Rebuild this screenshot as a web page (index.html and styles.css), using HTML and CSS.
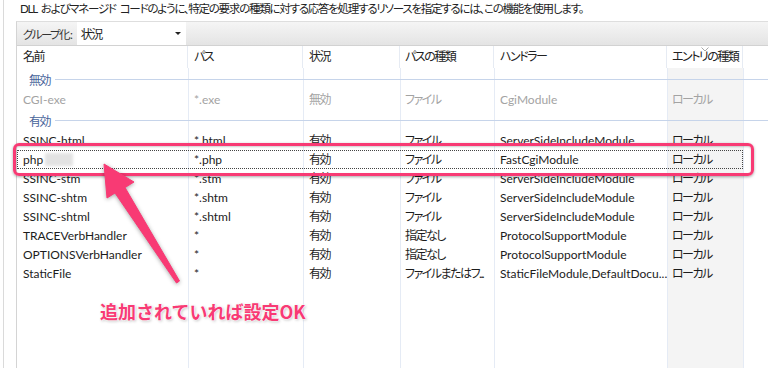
FILE: index.html
```html
<!DOCTYPE html>
<html lang="ja">
<head>
<meta charset="utf-8">
<title>ハンドラー マッピング</title>
<link rel="stylesheet" href="styles.css">
</head>
<body>
<div class="frame">
  <p class="desc">DLL<span class="sp"></span>およびマネージド<span class="sp"></span>コードのように、特定の要求の種類に対する応答を処理するリソースを指定するには、この機能を使用します。</p>
  <div class="grid">
    <div class="groupbar">
      <span class="gb-label">グループ化<span class="colon">:</span></span>
      <div class="combo"><span class="j">状況</span><span class="caret"></span></div>
    </div>
    <div class="row head">
      <div class="c j">名前</div>
      <div class="c j">パス</div>
      <div class="c j">状況</div>
      <div class="c j">パスの種類</div>
      <div class="c j">ハンドラー</div>
      <div class="c j sorted">エントリの種類<svg class="sort" width="8" height="5" viewBox="0 0 8 5"><path d="M0.5 0.5 L4 4 L7.5 0.5" fill="none" stroke="#a8a8a8" stroke-width="1"/></svg></div>
    </div>
    <div class="tbody">
      <div class="group"><span class="j">無効</span><i></i></div>
      <div class="row disabled">
        <div class="c">CGI-exe</div><div class="c">*.exe</div><div class="c j">無効</div><div class="c j">ファイル</div><div class="c">CgiModule</div><div class="c j">ローカル</div>
      </div>
      <div class="group"><span class="j">有効</span><i></i></div>
      <div class="row">
        <div class="c">SSINC-html</div><div class="c">*.html</div><div class="c j">有効</div><div class="c j">ファイル</div><div class="c">ServerSideIncludeModule</div><div class="c j">ローカル</div>
      </div>
      <div class="row focus">
        <div class="c">php<span class="blur"></span></div><div class="c">*.php</div><div class="c j">有効</div><div class="c j">ファイル</div><div class="c">FastCgiModule</div><div class="c j">ローカル</div>
      </div>
      <div class="row">
        <div class="c">SSINC-stm</div><div class="c">*.stm</div><div class="c j">有効</div><div class="c j">ファイル</div><div class="c">ServerSideIncludeModule</div><div class="c j">ローカル</div>
      </div>
      <div class="row">
        <div class="c">SSINC-shtm</div><div class="c">*.shtm</div><div class="c j">有効</div><div class="c j">ファイル</div><div class="c">ServerSideIncludeModule</div><div class="c j">ローカル</div>
      </div>
      <div class="row">
        <div class="c">SSINC-shtml</div><div class="c">*.shtml</div><div class="c j">有効</div><div class="c j">ファイル</div><div class="c">ServerSideIncludeModule</div><div class="c j">ローカル</div>
      </div>
      <div class="row">
        <div class="c">TRACEVerbHandler</div><div class="c">*</div><div class="c j">有効</div><div class="c j">指定なし</div><div class="c">ProtocolSupportModule</div><div class="c j">ローカル</div>
      </div>
      <div class="row">
        <div class="c">OPTIONSVerbHandler</div><div class="c">*</div><div class="c j">有効</div><div class="c j">指定なし</div><div class="c">ProtocolSupportModule</div><div class="c j">ローカル</div>
      </div>
      <div class="row">
        <div class="c">StaticFile</div><div class="c">*</div><div class="c j">有効</div><div class="c j">ファイルまたはフ...</div><div class="c">StaticFileModule,DefaultDocu...</div><div class="c j">ローカル</div>
      </div>
    </div>
  </div>
</div>
<div class="callout-box"></div>
<svg class="arrow" width="768" height="368" viewBox="0 0 768 368">
  <polygon points="104,164 134,182 125,187.5 179.5,281 176.5,283 115,193 107,198" fill="#f83a74" stroke="#f83a74" stroke-width="1" stroke-linejoin="round"/>
</svg>
<div class="callout-text">追加されていれば設定OK</div>
</body>
</html>
```
FILE: styles.css
```css
* { box-sizing: border-box; }
html, body { margin: 0; padding: 0; }
body {
  width: 768px;
  height: 368px;
  overflow: hidden;
  position: relative;
  background: #fff;
  font-family: "Lato", "Noto Sans CJK JP", sans-serif;
  font-size: 12px;
  color: #1c1c1c;
  font-feature-settings: "palt";
}
.j { letter-spacing: -1.5px; }
.frame {
  margin-left: 3px;
  height: 368px;
  border-left: 1px solid #dadada;
  display: flex;
  flex-direction: column;
}
.desc {
  margin: 0 0 0 16px;
  height: 21px;
  line-height: 17px;
  font-size: 11.5px;
  letter-spacing: -1.25px;
  white-space: nowrap;
  color: #222;
}
.sp {
  display: inline-block;
  width: 4px;
}
.grid {
  margin-left: 12px;
  flex: 1;
  border-left: 1px solid #d4d4d4;
  border-top: 1px solid #dedede;
  display: flex;
  flex-direction: column;
}
.groupbar {
  height: 24px;
  display: flex;
  align-items: center;
  background: linear-gradient(#f5f5f5, #e4e4e4);
  border-bottom: 1px solid #d2d2d2;
}
.gb-label {
  flex: none;
  padding-left: 6px;
  color: #333;
  white-space: nowrap;
  font-size: 11.5px;
  letter-spacing: -1.6px;
}
.colon {
  letter-spacing: 0;
  margin-left: 1px;
}
.combo {
  width: 109px;
  height: 23px;
  margin-left: 4px;
  background: #fff;
  display: flex;
  align-items: center;
  justify-content: space-between;
  padding: 0 4px 0 4px;
}
.caret {
  width: 0;
  height: 0;
  border-left: 3px solid transparent;
  border-right: 3px solid transparent;
  border-top: 3px solid #222;
  margin-right: 1px;
}
.row {
  display: grid;
  grid-template-columns: 171px 115px 97px 94px 173px 76px;
  width: 726px;
  height: 19px;
  align-items: center;
}
.row .c {
  padding-left: 6px;
  white-space: nowrap;
  overflow: hidden;
  line-height: 19px;
}
.row.head {
  height: 22px;
  background: #fff;
}
.row.head .c {
  height: 22px;
  line-height: 22px;
  border-right: 1px solid #e6ebf3;
  color: #222;
}
.row .c:nth-child(4), .row .c:nth-child(6) { padding-left: 5px; }
.row.head .sorted {
  position: relative;
}
.sort {
  position: absolute;
  left: 34px;
  top: 1px;
}
.tbody {
  flex: 1;
  background:
    linear-gradient(#e5ebf5, #e5ebf5) 171px 0 / 1px 100% no-repeat,
    linear-gradient(#e5ebf5, #e5ebf5) 286px 0 / 1px 100% no-repeat,
    linear-gradient(#e5ebf5, #e5ebf5) 383px 0 / 1px 100% no-repeat,
    linear-gradient(#e5ebf5, #e5ebf5) 477px 0 / 1px 100% no-repeat,
    linear-gradient(#e5ebf5, #e5ebf5) 650px 0 / 1px 100% no-repeat,
    linear-gradient(#e5ebf5, #e5ebf5) 726px 0 / 1px 100% no-repeat,
    linear-gradient(#f4f4f4, #f4f4f4) 651px 0 / 75px 100% no-repeat,
    #fff;
}
.group {
  height: 22px;
  display: flex;
  align-items: center;
  padding-left: 12px;
  color: #46639a;
}
.group i {
  flex: 1;
  height: 1px;
  background: #c6d4ea;
  margin-left: 5px;
}
.row.disabled { color: #a3a3a3; }
.row.focus {
  outline: 1px dotted #444;
  outline-offset: -1px;
}
.blur {
  display: inline-block;
  width: 28px;
  height: 13px;
  margin-left: 2px;
  vertical-align: -2px;
  background: #e2e2e2;
  filter: blur(1.5px);
}
.callout-box {
  position: absolute;
  left: 13px;
  top: 143px;
  width: 741px;
  height: 33px;
  border: 3px solid #f83a74;
  border-radius: 6px;
  box-shadow: 0 1px 3px rgba(0,0,0,0.35), inset 0 1px 2px rgba(0,0,0,0.2);
}
.arrow {
  position: absolute;
  left: 0;
  top: 0;
  filter: drop-shadow(0 1px 2px rgba(0,0,0,0.35));
}
.callout-text {
  position: absolute;
  left: 100px;
  top: 299px;
  font-family: "Noto Sans CJK JP", sans-serif;
  font-feature-settings: normal;
  font-weight: 700;
  font-size: 18px;
  line-height: 24px;
  color: #f83a74;
  white-space: nowrap;
  text-shadow: 0 0 1px #fff, 0 0 2px #fff, 0 0 2px #fff, 1px 1px 3px rgba(0,0,0,0.3);
}
```
